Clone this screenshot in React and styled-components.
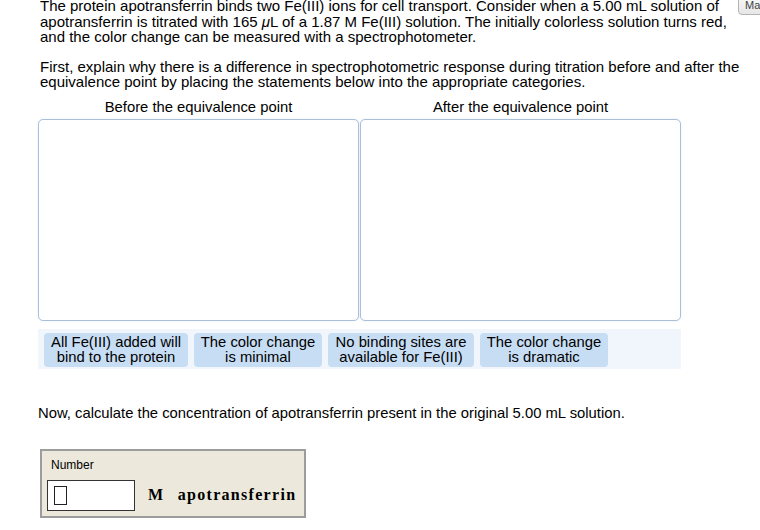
import React from "react";
import styled, { createGlobalStyle } from "styled-components";

const Global = createGlobalStyle`
  html, body { margin: 0; padding: 0; background: #fff; }
  body {
    font-family: "Liberation Sans", Arial, sans-serif;
    color: #000;
    overflow: hidden;
    width: 760px;
    height: 530px;
  }
`;

const Page = styled.div`
  position: relative;
  width: 760px;
  height: 530px;
  overflow: hidden;
`;

const Content = styled.div`
  margin-top: -2px;
  padding-left: 38px;
  width: 712px;
`;

const Para = styled.p`
  margin: 0 0 ${(p) => p.$gap || 0}px 2px;
  font-size: 15px;
  line-height: 15.5px;
  white-space: nowrap;
`;

const Mu = styled.i`
  font-style: italic;
`;

const Heads = styled.div`
  display: grid;
  grid-template-columns: 321px 321px;
  column-gap: 1px;
  margin-top: 9px;
  font-size: 14.8px;
  line-height: 16px;
  text-align: center;
`;

const Bins = styled.div`
  display: grid;
  grid-template-columns: 321px 321px;
  column-gap: 1px;
  margin-top: 4px;
`;

const Bin = styled.div`
  height: 200px;
  border: 1px solid #a9c0da;
  border-radius: 5px;
  background: #fff;
  box-shadow: 0 0 2px rgba(169, 192, 218, 0.35);
`;

const Tray = styled.div`
  display: flex;
  gap: 6px;
  margin-top: 8px;
  width: 631px;
  padding: 4px 6px 2px;
  background: #f1f6fc;
  height: 34px;
`;

const Token = styled.div`
  display: flex;
  align-items: center;
  justify-content: center;
  height: 34px;
  padding: 0 3px;
  box-sizing: border-box;
  width: ${(p) => p.$w}px;
  background: #c7ddf3;
  border-radius: 4px;
  font-size: 14.8px;
  line-height: 14.5px;
  text-align: center;
  white-space: pre-line;
`;

const Prompt = styled.p`
  margin: 36px 0 0 0;
  font-size: 14.8px;
  line-height: 16px;
`;

const AnswerBox = styled.div`
  margin: 28px 0 0 2px;
  width: 257px;
  height: 65px;
  border: 2px solid #9c9c9c;
  background: #ece9dc;
  padding: 0 0 0 5px;
`;

const Label = styled.div`
  font-size: 12px;
  line-height: 14px;
  margin: 7px 0 0 4px;
`;

const Row = styled.div`
  display: flex;
  align-items: center;
  margin-top: 8px;
  gap: 13px;
`;

const Field = styled.div`
  width: 80px;
  height: 29px;
  border: 1px solid #333;
  background: #fff;
  display: flex;
  align-items: center;
  padding-left: 6px;
`;

const Caret = styled.span`
  display: block;
  width: 11px;
  height: 17px;
  border: 1px solid #222;
`;

const Unit = styled.span`
  font-family: "Liberation Serif", "Times New Roman", serif;
  font-weight: bold;
  font-size: 16px;
  letter-spacing: 1.3px;
  word-spacing: 8px;
`;

const CornerButton = styled.div`
  position: absolute;
  top: -6px;
  left: 738px;
  width: 40px;
  height: 21px;
  border: 1px solid #b4b4b4;
  border-radius: 4px;
  background: linear-gradient(#fbfbfb, #e6e6e6);
  font-size: 11px;
  line-height: 14px;
  padding: 3px 0 0 6px;
  box-sizing: border-box;
  color: #444;
`;

const tokens = [
  { text: "All Fe(III) added will\nbind to the protein", w: 144 },
  { text: "The color change\nis minimal", w: 128 },
  { text: "No binding sites are\navailable for Fe(III)", w: 146 },
  { text: "The color change\nis dramatic", w: 128 },
];

export default function App() {
  return (
    <Page>
      <Global />
      <CornerButton>Ma</CornerButton>
      <Content>
        <Para $gap={14}>
          The protein apotransferrin binds two Fe(III) ions for cell transport. Consider when a 5.00 mL solution of
          <br />
          apotransferrin is titrated with 165 <Mu>μ</Mu>L of a 1.87 M Fe(III) solution. The initially colorless solution turns red,
          <br />
          and the color change can be measured with a spectrophotometer.
        </Para>
        <Para>
          First, explain why there is a difference in spectrophotometric response during titration before and after the
          <br />
          equivalence point by placing the statements below into the appropriate categories.
        </Para>
        <Heads>
          <div>Before the equivalence point</div>
          <div>After the equivalence point</div>
        </Heads>
        <Bins>
          <Bin />
          <Bin />
        </Bins>
        <Tray>
          {tokens.map((t) => (
            <Token key={t.text} $w={t.w}>
              {t.text}
            </Token>
          ))}
        </Tray>
        <Prompt>Now, calculate the concentration of apotransferrin present in the original 5.00 mL solution.</Prompt>
        <AnswerBox>
          <Label>Number</Label>
          <Row>
            <Field>
              <Caret />
            </Field>
            <Unit>M apotransferrin</Unit>
          </Row>
        </AnswerBox>
      </Content>
    </Page>
  );
}
